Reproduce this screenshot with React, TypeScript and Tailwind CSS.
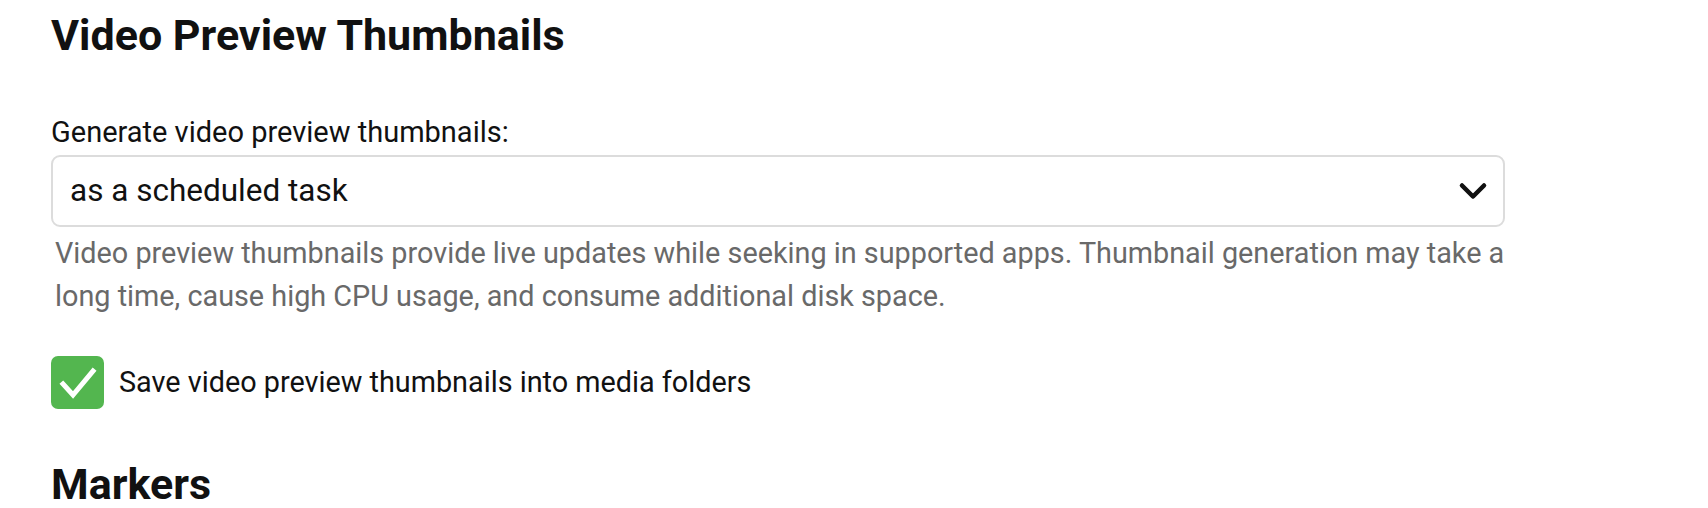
import { ChevronDown } from 'lucide-react'

export default function App() {
  return (
    <div className="min-h-[508px] w-[1708px] overflow-hidden bg-white pl-[51px] font-['Roboto',sans-serif] text-[#111]">
      {/* Video preview thumbnails */}
      <section className="pt-[10px]">
        <h2 className="text-[43px] font-bold leading-[50px]">Video Preview Thumbnails</h2>

        <div className="mt-[55px]">
          <label className="block text-[29px] leading-[34px]">Generate video preview thumbnails:</label>
          <div className="mt-[6px] flex h-[72px] w-[1454px] items-center justify-between rounded-[9px] border-2 border-[#dcdcdc] pl-[17px] pr-[8px]">
            <span className="text-[31.5px]">as a scheduled task</span>
            <ChevronDown className="h-[44px] w-[44px] text-[#111]" strokeWidth={2.5} />
          </div>
          <p className="w-[1460px] pl-[4px] pt-[5px] text-[28.8px] leading-[42.5px] text-[#696969]">
            Video preview thumbnails provide live updates while seeking in supported apps. Thumbnail generation may take a long time, cause high CPU usage, and consume additional disk space.
          </p>
        </div>

        <div className="mt-[39px] flex items-center gap-[15px]">
          <div className="flex h-[53px] w-[53px] items-center justify-center rounded-[7px] bg-[#53b64f]">
            <svg viewBox="0 0 53 53" className="h-[53px] w-[53px]" fill="none">
              <path d="M12 28 L22 39 L42 15" stroke="white" strokeWidth="5" strokeLinecap="square" />
            </svg>
          </div>
          <span className="text-[28.8px]">Save video preview thumbnails into media folders</span>
        </div>
      </section>

      {/* Markers */}
      <section className="mt-[50px]">
        <h2 className="text-[43px] font-bold leading-[50px]">Markers</h2>
      </section>
    </div>
  )
}
